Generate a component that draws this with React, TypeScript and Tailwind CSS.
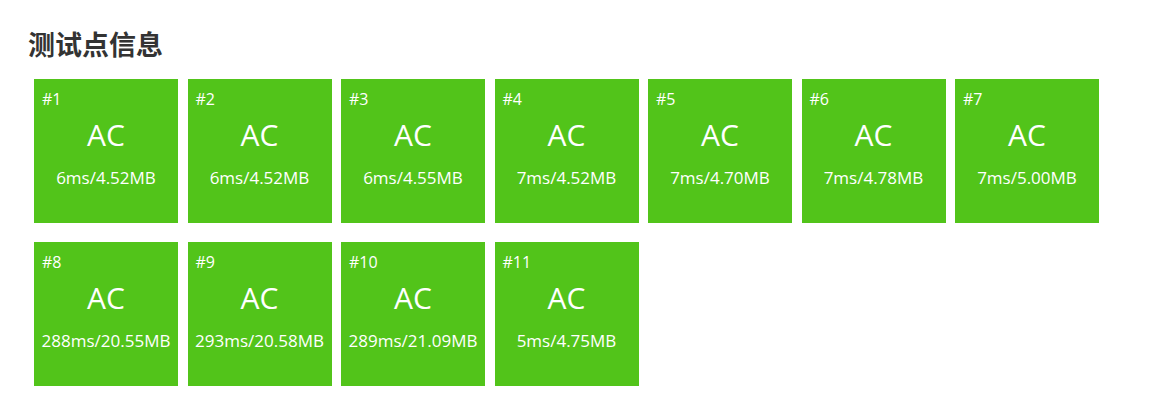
import React from "react";

const cases = [
  { t: "6ms", m: "4.52MB" },
  { t: "6ms", m: "4.52MB" },
  { t: "6ms", m: "4.55MB" },
  { t: "7ms", m: "4.52MB" },
  { t: "7ms", m: "4.70MB" },
  { t: "7ms", m: "4.78MB" },
  { t: "7ms", m: "5.00MB" },
  { t: "288ms", m: "20.55MB" },
  { t: "293ms", m: "20.58MB" },
  { t: "289ms", m: "21.09MB" },
  { t: "5ms", m: "4.75MB" },
];

export default function App() {
  return (
    <div
      className="w-[1166px] h-[420px] bg-white overflow-hidden"
      style={{ fontFamily: '"Open Sans", "Noto Sans CJK SC", sans-serif' }}
    >
      <h2 className="ml-[28px] pt-[27px] text-[27px] leading-[36px] font-bold text-[#333]">
        测试点信息
      </h2>
      <div className="ml-[34px] mt-[16px] flex flex-wrap w-[1075px] gap-x-[9.5px] gap-y-[19px]">
        {cases.map((c, i) => (
          <div key={i} className="w-[144px] h-[144px] bg-[#52c41a] text-white flex flex-col">
            <div className="pl-[8px] pt-[10px] text-[16px] leading-[20px]">#{i + 1}</div>
            <div className="mt-[11px] text-center text-[30px] leading-[30px]">AC</div>
            <div className="mt-[17.5px] text-center text-[17px] leading-[20px] whitespace-nowrap">
              {c.t}/{c.m}
            </div>
          </div>
        ))}
      </div>
    </div>
  );
}
